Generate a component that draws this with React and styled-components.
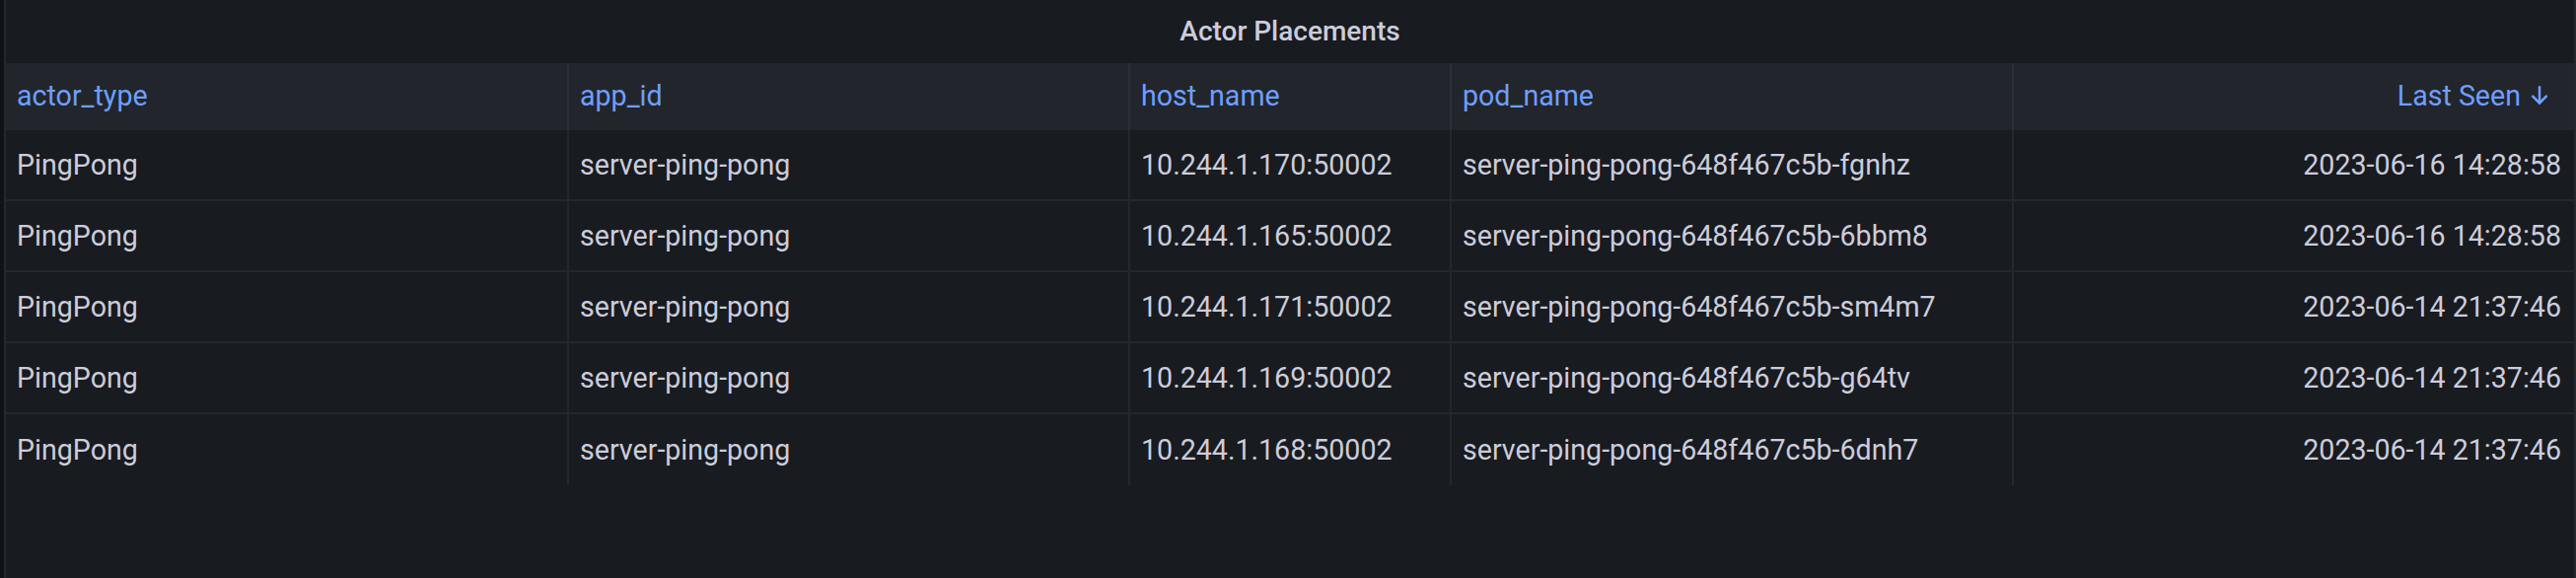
import React from 'react';
import styled, { createGlobalStyle } from 'styled-components';

const GlobalStyle = createGlobalStyle`
  html, body {
    margin: 0;
    padding: 0;
    background: #111217;
  }
  body {
    font-family: Roboto, "Liberation Sans", sans-serif;
  }
`;

const Page = styled.div`
  height: 586px;
  padding-left: 4px;
  box-sizing: border-box;
  overflow: hidden;
`;

const Panel = styled.section`
  height: 100%;
  background: #181b1f;
  border-left: 2px solid #25282e;
  border-right: 2px solid #25282e;
  box-sizing: border-box;
  display: flex;
  flex-direction: column;
`;

const PanelTitle = styled.h2`
  margin: 0;
  height: 64px;
  display: flex;
  align-items: center;
  justify-content: center;
  font-size: 28px;
  font-weight: 500;
  color: #ccccdc;
  padding-bottom: 2px;
  box-sizing: border-box;
`;

const Grid = styled.div`
  display: grid;
  grid-template-columns: 569px 569px 326px 570px 1fr;
`;

const HeadCell = styled.div`
  height: 68px;
  background: #22252b;
  display: flex;
  align-items: center;
  justify-content: ${p => (p.$right ? 'flex-end' : 'flex-start')};
  padding: 0 ${p => (p.$right ? '20px' : '12px')} 2px 11px;
  box-sizing: border-box;
  border-left: ${p => (p.$first ? 'none' : '2px solid #2c2f35')};
  font-size: 28.6px;
  color: #6e9fff;
  white-space: nowrap;
`;

const Cell = styled.div`
  height: 72px;
  display: flex;
  align-items: center;
  justify-content: ${p => (p.$right ? 'flex-end' : 'flex-start')};
  padding: 0 13px 0 11px;
  box-sizing: border-box;
  border-left: ${p => (p.$first ? 'none' : '2px solid #24272d')};
  border-bottom: ${p => (p.$last ? 'none' : '2px solid #24272d')};
  font-size: 28.6px;
  color: #ccccdc;
  white-space: nowrap;
`;

const SortIcon = styled.svg`
  width: 30px;
  height: 30px;
  margin-left: 4px;
  flex-shrink: 0;
`;

const columns = [
  { key: 'actor_type', label: 'actor_type' },
  { key: 'app_id', label: 'app_id' },
  { key: 'host_name', label: 'host_name' },
  { key: 'pod_name', label: 'pod_name' },
  { key: 'last_seen', label: 'Last Seen', right: true, sorted: true },
];

const rows = [
  ['PingPong', 'server-ping-pong', '10.244.1.170:50002', 'server-ping-pong-648f467c5b-fgnhz', '2023-06-16 14:28:58'],
  ['PingPong', 'server-ping-pong', '10.244.1.165:50002', 'server-ping-pong-648f467c5b-6bbm8', '2023-06-16 14:28:58'],
  ['PingPong', 'server-ping-pong', '10.244.1.171:50002', 'server-ping-pong-648f467c5b-sm4m7', '2023-06-14 21:37:46'],
  ['PingPong', 'server-ping-pong', '10.244.1.169:50002', 'server-ping-pong-648f467c5b-g64tv', '2023-06-14 21:37:46'],
  ['PingPong', 'server-ping-pong', '10.244.1.168:50002', 'server-ping-pong-648f467c5b-6dnh7', '2023-06-14 21:37:46'],
];

function ArrowDown() {
  return (
    <SortIcon viewBox="0 0 24 24" fill="none" stroke="#6e9fff" strokeWidth="2" strokeLinecap="round" strokeLinejoin="round">
      <path d="M12 5v13" />
      <path d="M6.5 12.5L12 18l5.5-5.5" />
    </SortIcon>
  );
}

export default function App() {
  return (
    <>
      <GlobalStyle />
      <Page>
        <Panel>
          <PanelTitle>Actor Placements</PanelTitle>
          <Grid>
            {columns.map((c, i) => (
              <HeadCell key={c.key} $first={i === 0} $right={c.right}>
                {c.label}
                {c.sorted && <ArrowDown />}
              </HeadCell>
            ))}
            {rows.map((r, ri) =>
              r.map((v, ci) => (
                <Cell
                  key={ri + '-' + ci}
                  $first={ci === 0}
                  $right={columns[ci].right}
                  $last={ri === rows.length - 1}
                >
                  {v}
                </Cell>
              ))
            )}
          </Grid>
        </Panel>
      </Page>
    </>
  );
}
